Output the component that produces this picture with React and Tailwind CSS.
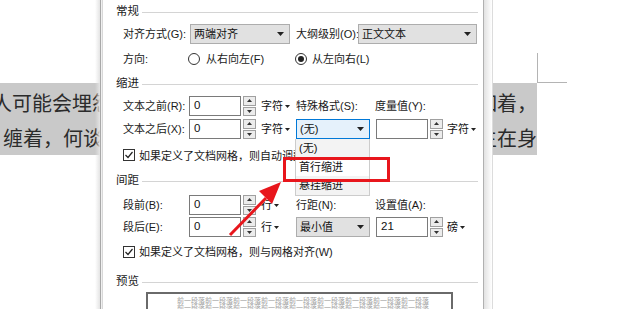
import React from "react";

const UI = { fontFamily: '"Liberation Sans", "Noto Sans CJK SC", sans-serif' };

function Tri({ down = true, size = 7, color = "#333" }) {
  const h = Math.round(size * 0.55);
  return (
    <svg width={size} height={h} viewBox={`0 0 ${size} ${h}`} className="block shrink-0">
      {down ? (
        <polygon points={`0,0 ${size},0 ${size / 2},${h}`} fill={color} />
      ) : (
        <polygon points={`0,${h} ${size},${h} ${size / 2},0`} fill={color} />
      )}
    </svg>
  );
}

function Heading({ text, className = "" }) {
  return (
    <div className={`flex items-center pl-[13px] pr-[5px] ${className}`}>
      <span className="text-[11.5px] text-[#1a1a1a] leading-none whitespace-nowrap">{text}</span>
      <div className="flex-1 ml-[3px] h-px bg-[#d4d4d4]" />
    </div>
  );
}

function Select({ text, w, focused = false }) {
  return (
    <div
      className={`h-[20px] shrink-0 flex items-center justify-between pl-[3px] pr-[5px] border ${
        focused ? "border-[#0078d7] bg-[#e5f1fb]" : "border-[#adadad] bg-[#e1e1e1]"
      }`}
      style={{ width: w }}
    >
      <span className="text-[11px] leading-none text-[#111] whitespace-nowrap">{text}</span>
      <Tri size={7} color="#222" />
    </div>
  );
}

function Input({ text, w }) {
  return (
    <div className="h-[20px] shrink-0 flex items-center pl-[4px] border border-[#7a7a7a] bg-white" style={{ width: w }}>
      <span className="text-[11.5px] leading-none text-[#111]">{text}</span>
    </div>
  );
}

function Spinner() {
  return (
    <div className="ml-[2px] w-[13px] h-[20px] shrink-0 flex flex-col gap-px">
      <div className="flex-1 flex items-center justify-center border border-[#a0a0a0] bg-[#ececec]">
        <Tri down={false} size={5} color="#333" />
      </div>
      <div className="flex-1 flex items-center justify-center border border-[#a0a0a0] bg-[#ececec]">
        <Tri size={5} color="#333" />
      </div>
    </div>
  );
}

function Unit({ text, w = 35, ml = 5 }) {
  return (
    <div className="flex items-center gap-[2px] shrink-0" style={{ width: w, marginLeft: ml }}>
      <span className="text-[11px] leading-none text-[#111] whitespace-nowrap">{text}</span>
      <Tri size={5} color="#222" />
    </div>
  );
}

function Label({ text, w }) {
  return (
    <div className="shrink-0 text-[11px] leading-none text-[#1a1a1a] whitespace-nowrap" style={{ width: w }}>
      {text}
    </div>
  );
}

function Radio({ checked }) {
  return (
    <div className="w-[12px] h-[12px] shrink-0 rounded-full border border-[#333] bg-white flex items-center justify-center">
      {checked && <div className="w-[6px] h-[6px] rounded-full bg-[#222]" />}
    </div>
  );
}

function Check() {
  return (
    <div className="w-[12px] h-[12px] shrink-0 border border-[#333] bg-white flex items-center justify-center">
      <svg width="10" height="10" viewBox="0 0 10 10">
        <polyline points="1.5,5 4,7.5 8.5,2" fill="none" stroke="#222" strokeWidth="1.2" />
      </svg>
    </div>
  );
}

const previewLine = "前一段落前一段落前一段落前一段落前一段落前一段落前一段落前一段落前一段落";

export default function App() {
  return (
    <div className="relative w-[620px] h-[309px] overflow-hidden bg-white" style={UI}>
      {/* document */}
      <div className="pt-[53px]">
        <div className="ml-[537px] w-[30px] h-[30px] border-l border-b border-[#b4b4b4]" />
        <div
          className="w-[537px] h-[72px] bg-[#c9c9c9] flex justify-between text-[20px] text-[#2b2b2b]"
          style={{ fontFamily: '"Noto Sans CJK SC", serif' }}
        >
          <div className="w-[100px] overflow-hidden pt-[2px]">
            <div className="-ml-[8px] whitespace-nowrap leading-[35px]">人可能会埋怨</div>
            <div className="ml-[3px] whitespace-nowrap leading-[35px]">缠着，何谈</div>
          </div>
          <div className="w-[60px] overflow-hidden pt-[2px] flex flex-col items-end">
            <div className="whitespace-nowrap leading-[35px]">如着，</div>
            <div className="whitespace-nowrap leading-[35px]">生在身</div>
          </div>
        </div>
      </div>

      {/* dialog window */}
      <div className="absolute left-[95px] top-0 h-[309px] flex">
        <div className="w-[5px] h-full bg-gradient-to-r from-transparent to-[#e4e4e4]" />
        <div className="w-[3px] h-full border-l border-[#a8a8a8] bg-[#f0f0f0] border-r border-r-[#d8d8d8]" />
        <div className="w-[380px] h-full bg-white flex flex-col overflow-hidden *:shrink-0">
          <Heading text="常规" className="h-[24px]" />
          <div className="h-[20px] flex items-center pl-[20px]">
            <Label text="对齐方式(G):" w={67} />
            <Select text="两端对齐" w={100} />
            <div className="ml-[6px]">
              <Label text="大纲级别(O):" w={62} />
            </div>
            <Select text="正文文本" w={119} />
          </div>
          <div className="mt-[5px] h-[20px] flex items-center pl-[20px]">
            <Label text="方向:" w={65} />
            <Radio />
            <div className="ml-[6px] w-[89px] shrink-0 text-[11px] leading-none text-[#1a1a1a] whitespace-nowrap">从右向左(F)</div>
            <Radio checked />
            <div className="ml-[5px] text-[11px] leading-none text-[#1a1a1a] whitespace-nowrap">从左向右(L)</div>
          </div>

          <Heading text="缩进" className="mt-[3px] h-[24px]" />
          <div className="h-[20px] flex items-center pl-[20px]">
            <Label text="文本之前(R):" w={66} />
            <Input text="0" w={52} />
            <Spinner />
            <Unit text="字符" />
            <Label text="特殊格式(S):" w={79} />
            <Label text="度量值(Y):" w={70} />
          </div>
          <div className="mt-[3px] h-[20px] flex items-center pl-[20px]">
            <Label text="文本之后(X):" w={66} />
            <Input text="0" w={52} />
            <Spinner />
            <Unit text="字符" />
            <Select text="(无)" w={74} focused />
            <div className="ml-[6px]">
              <Input text="" w={52} />
            </div>
            <Spinner />
            <Unit text="字符" ml={4} />
          </div>
          <div className="h-[32px] flex items-center pl-[20px] gap-[4px]">
            <Check />
            <div className="w-[156px] overflow-hidden">
              <span className="text-[11px] leading-none text-[#1a1a1a] whitespace-nowrap">
                如果定义了文档网格，则自动调整右缩进(D)
              </span>
            </div>
          </div>

          <Heading text="间距" className="h-[20px]" />
          <div className="mt-[4px] h-[20px] flex items-center pl-[20px]">
            <Label text="段前(B):" w={66} />
            <Input text="0" w={52} />
            <Spinner />
            <Unit text="行" />
            <Label text="行距(N):" w={79} />
            <Label text="设置值(A):" w={70} />
          </div>
          <div className="mt-[2px] h-[20px] flex items-center pl-[20px]">
            <Label text="段后(E):" w={66} />
            <Input text="0" w={52} />
            <Spinner />
            <Unit text="行" />
            <Select text="最小值" w={74} />
            <div className="ml-[6px]">
              <Input text="21" w={52} />
            </div>
            <Spinner />
            <Unit text="磅" ml={4} />
          </div>
          <div className="h-[30px] flex items-center pl-[20px] gap-[4px]">
            <Check />
            <span className="text-[11px] leading-none text-[#1a1a1a] whitespace-nowrap">
              如果定义了文档网格，则与网格对齐(W)
            </span>
          </div>

          <Heading text="预览" className="mt-[5px] h-[20px]" />
          <div className="ml-[43px] w-[307px] h-[40px] border-2 border-[#6a6a6a] bg-white pt-[3px] pl-[29px] overflow-hidden">
            <div className="text-[7px] leading-[7px] text-[#a0a0a0] whitespace-nowrap">{previewLine}</div>
            <div className="text-[7px] leading-[7px] text-[#a0a0a0] whitespace-nowrap">{previewLine}</div>
          </div>
        </div>
        <div className="w-[10px] h-full border-l border-[#b0b0b0] bg-gradient-to-r from-[#e2e2e2] to-white border-r border-r-[#dcdcdc]" />
      </div>

      {/* dropdown list */}
      <div className="absolute left-[295px] top-[139px] w-[75px] h-[57px] bg-[#f3f3f3] border border-[#cccccc] border-t-0 flex flex-col">
        <div className="h-[19px] flex items-center pl-[3px] text-[11px] leading-none text-[#111]">(无)</div>
        <div className="h-[19px] flex items-center pl-[3px] text-[11px] leading-none text-[#111] bg-white">首行缩进</div>
        <div className="h-[19px] flex items-center pl-[3px] text-[11px] leading-none text-[#111]">悬挂缩进</div>
      </div>

      {/* red highlight box */}
      <div className="absolute left-[283px] top-[157px] w-[107px] h-[25px] border-[3px] border-[#e8161c]" />

      {/* red arrow */}
      <svg className="absolute left-0 top-0" width="620" height="309" viewBox="0 0 620 309">
        <line x1="230" y1="235" x2="266" y2="198" stroke="#e8161c" strokeWidth="3" />
        <polygon points="281,182 272,204 259,191" fill="#e8161c" />
      </svg>
    </div>
  );
}
